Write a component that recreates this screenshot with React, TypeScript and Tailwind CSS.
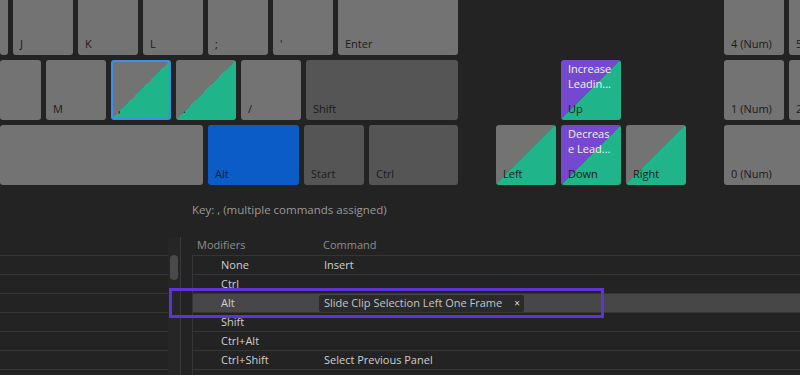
type Variant = "light" | "dark" | "blue" | "green" | "purple";

const variantClass: Record<Variant, string> = {
  light: "bg-[#737373] text-[#1b1b1b]",
  dark: "bg-[#555555] text-[#1b1b1b]",
  blue: "bg-[#0b5cc6] text-[#0d1f3d]",
  green: "bg-[linear-gradient(to_bottom_right,#737373_50%,#1fb48a_50%)] text-[#1b1b1b]",
  purple: "bg-[linear-gradient(to_bottom_right,#7549cf_50%,#1fb48a_50%)] text-[#1b1b1b]",
};

const Key = ({
  label = "",
  w = "w-[60px]",
  variant = "light",
  top,
  selected = false,
}: {
  label?: string;
  w?: string;
  variant?: Variant;
  top?: string[];
  selected?: boolean;
}) => {
  const pad = !label
    ? ""
    : selected
      ? "border-2 border-[#3b8fe6] px-[5px] pb-[2px]"
      : "px-[7px] pb-[4px] pt-[1px]";
  return (
    <div
      className={`${w} h-[60px] shrink-0 rounded-[3px] flex flex-col justify-between text-[11px] leading-[15px] ${variantClass[variant]} ${pad}`}
    >
      <div className="text-[#f2f2f2]">
        {top?.map((t) => (
          <div key={t}>{t}</div>
        ))}
      </div>
      <div className="whitespace-nowrap">{label}</div>
    </div>
  );
};

const Gap = ({ w }: { w: string }) => <div className={`${w} shrink-0`} />;

const modRows = [
  { mod: "None", cmd: "Insert" },
  { mod: "Ctrl", cmd: "" },
  { mod: "Alt", cmd: "chip" },
  { mod: "Shift", cmd: "" },
  { mod: "Ctrl+Alt", cmd: "" },
  { mod: "Ctrl+Shift", cmd: "Select Previous Panel" },
  { mod: "Alt+Shift", cmd: "Slide Clip Selection Left Five Frames" },
];

export default function App() {
  return (
    <div
      className="relative w-[800px] h-[375px] overflow-hidden bg-[#232323] text-[#cfcfcf]"
      style={{ fontFamily: '"Open Sans", "Noto Sans", sans-serif' }}
    >
      {/* keyboard */}
      <div className="flex flex-col gap-[5px] h-[185px]">
        <div className="flex gap-[5px] -mt-[5px]">
          <Key w="w-[8px]" />
          <Key label="J" />
          <Key label="K" />
          <Key label="L" />
          <Key label=";" />
          <Key label="'" />
          <Key label="Enter" w="w-[120px]" />
          <Gap w="w-[256px]" />
          <Key label="4 (Num)" />
          <Key label="5 (Num)" />
        </div>
        <div className="flex gap-[5px]">
          <Key w="w-[41px]" />
          <Key label="M" />
          <Key label="," variant="green" selected />
          <Key label="." variant="green" />
          <Key label="/" />
          <Key label="Shift" w="w-[152px]" variant="dark" />
          <Gap w="w-[93px]" />
          <Key label="Up" variant="purple" top={["Increase", "Leadin..."]} />
          <Gap w="w-[93px]" />
          <Key label="1 (Num)" />
          <Key label="2 (Num)" />
        </div>
        <div className="flex gap-[5px]">
          <Key w="w-[203px]" />
          <Key label="Alt" w="w-[91px]" variant="blue" />
          <Key label="Start" variant="dark" />
          <Key label="Ctrl" w="w-[89px]" variant="dark" />
          <Gap w="w-[28px]" />
          <Key label="Left" variant="green" />
          <Key label="Down" variant="purple" top={["Decreas", "e Lead..."]} />
          <Key label="Right" variant="green" />
          <Gap w="w-[28px]" />
          <Key label="0 (Num)" w="w-[125px]" />
        </div>
      </div>

      {/* details */}
      <div className="flex h-[190px]">
        <div className="w-[168px] shrink-0 pt-[70px]">
          <div className="border-t border-[#353535]">
            {modRows.map((r) => (
              <div key={r.mod} className="h-[19px] border-b border-[#353535]" />
            ))}
          </div>
        </div>
        <div className="w-[13px] shrink-0 bg-[#262626] border-r border-[#383838] mt-[52px] pt-[18px] pl-[2px] pr-[2px]">
          <div className="h-[25px] w-[8px] rounded-full bg-[#4a4a4a]" />
        </div>
        <div className="flex-1 pl-[11px] pt-[17px]">
          <div className="text-[11.5px] leading-[16px] text-[#9a9a9a]">Key: , (multiple commands assigned)</div>
          <div className="flex h-[37px] items-end pb-[2px] text-[11px] text-[#8e8e8e]">
            <div className="w-[131px] pl-[5px]">Modifiers</div>
            <div>Command</div>
          </div>
          <div className="border-t border-l border-[#353535] text-[11px]">
            {modRows.map((r) => (
              <div
                key={r.mod}
                className={`flex h-[19px] items-center border-b border-[#353535] ${r.cmd === "chip" ? "bg-[#474747]" : ""}`}
              >
                <div className="w-[126px] pl-[28px] shrink-0">{r.mod}</div>
                {r.cmd === "chip" ? (
                  <div className="flex items-center h-[17px] w-[205px] bg-[#2a2a2a] rounded-[2px] pl-[5px] pr-[4px] text-[#c6c6c6]">
                    <span className="flex-1 whitespace-nowrap">Slide Clip Selection Left One Frame</span>
                    <span className="text-[10px] text-[#dcdcdc]">×</span>
                  </div>
                ) : (
                  <div className="pl-[5px] whitespace-nowrap">{r.cmd}</div>
                )}
              </div>
            ))}
          </div>
        </div>
      </div>

      {/* selection highlight */}
      <div className="absolute left-[169px] top-[288px] w-[435px] h-[30px] border-[3px] border-[#5d34d6] pointer-events-none" />
    </div>
  );
}
